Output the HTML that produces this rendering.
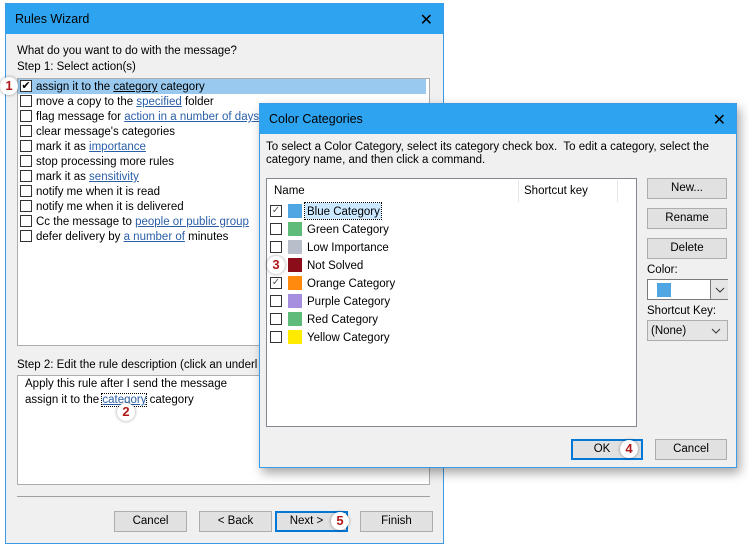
<!DOCTYPE html>
<html><head><style>
*{box-sizing:border-box;margin:0;padding:0}
body{width:749px;height:548px;background:#fff;font-family:"Liberation Sans",sans-serif;font-size:11.5px;color:#000;position:relative;overflow:hidden}
.abs{position:absolute}
.win{position:absolute;background:#f0f0f0;border:1px solid #3c9be6}
.tb{position:absolute;left:0;right:0;top:0;height:30px;background:#2ea4f0;font-size:12.5px;padding:8px 0 0 9px}
.x{position:absolute;right:10px;top:6px;font-size:16px;font-weight:300}
.box{position:absolute;background:#fff;border:1px solid #adadad}
.btn{position:absolute;background:#e1e1e1;border:1px solid #adadad;text-align:center;line-height:19px;font-size:11.5px}
.cb{position:absolute;width:12px;height:12px;border:1px solid #333;background:#fff}
.row{position:absolute;left:20px;height:15px;line-height:15px;white-space:nowrap}
.row .cb{left:0;top:1px}
.row span.t{position:absolute;left:16px;top:1px}
a{color:#2a5fa8;text-decoration:underline}
.badge{position:absolute;width:18px;height:18px;border-radius:9px;background:#fff;color:#b01a1a;font-weight:bold;font-size:13px;text-align:center;line-height:18px;box-shadow:0 0 3px rgba(0,0,0,.4)}
.sw{position:absolute;width:14px;height:14px}
.cr{position:absolute;left:270px;height:18px;line-height:18px;white-space:nowrap}
.cr .cb{left:0;top:3px}
.cr .sw{left:18px;top:2px}
.cr .t{position:absolute;left:37px;top:1px}
</style></head><body>

<div class="win" style="left:5px;top:3px;width:439px;height:541px">
  <div class="tb">Rules Wizard<span class="x">✕</span></div>
</div>
<div class="abs" style="left:17px;top:45px">What do you want to do with the message?</div>
<div class="abs" style="left:17px;top:61px">Step 1: Select action(s)</div>
<div class="box" style="left:17px;top:78px;width:413px;height:268px"></div>
<div class="abs" style="left:18px;top:79px;width:408px;height:15px;background:#99c9ef"></div>
<div class="row" style="top:79px"><div class="cb" style="font-size:11px;line-height:10px;text-align:center">✔</div><span class="t">assign it to the <u>category</u> category</span></div>
<div class="row" style="top:94px"><div class="cb"></div><span class="t">move a copy to the <a>specified</a> folder</span></div>
<div class="row" style="top:109px"><div class="cb"></div><span class="t">flag message for <a>action in a number of days</a></span></div>
<div class="row" style="top:124px"><div class="cb"></div><span class="t">clear message's categories</span></div>
<div class="row" style="top:139px"><div class="cb"></div><span class="t">mark it as <a>importance</a></span></div>
<div class="row" style="top:154px"><div class="cb"></div><span class="t">stop processing more rules</span></div>
<div class="row" style="top:169px"><div class="cb"></div><span class="t">mark it as <a>sensitivity</a></span></div>
<div class="row" style="top:184px"><div class="cb"></div><span class="t">notify me when it is read</span></div>
<div class="row" style="top:199px"><div class="cb"></div><span class="t">notify me when it is delivered</span></div>
<div class="row" style="top:214px"><div class="cb"></div><span class="t">Cc the message to <a>people or public group</a></span></div>
<div class="row" style="top:229px"><div class="cb"></div><span class="t">defer delivery by <a>a number of</a> minutes</span></div>
<div class="badge" style="left:0;top:77px">1</div>

<div class="abs" style="left:17px;top:359px">Step 2: Edit the rule description (click an underl</div>
<div class="box" style="left:17px;top:375px;width:413px;height:110px"></div>
<div class="abs" style="left:25px;top:378px">Apply this rule after I send the message</div>
<div class="abs" style="left:25px;top:394px">assign it to the <a style="outline:1px dotted #000">category</a> category</div>
<div class="badge" style="left:117px;top:403px">2</div>
<div class="abs" style="left:17px;top:496px;width:413px;height:1px;background:#a0a0a0"></div>
<div class="btn" style="left:114px;top:511px;width:73px;height:21px">Cancel</div>
<div class="btn" style="left:199px;top:511px;width:73px;height:21px">&lt; Back</div>
<div class="btn" style="left:275px;top:511px;width:73px;height:21px;border:2px solid #0078d7;padding-right:10px;line-height:17px">Next &gt;</div>
<div class="badge" style="left:331px;top:512px">5</div>
<div class="btn" style="left:360px;top:511px;width:73px;height:21px">Finish</div>

<div class="win" style="left:259px;top:103px;width:478px;height:365px;box-shadow:3px 5px 10px rgba(0,0,0,.35)">
  <div class="tb">Color Categories<span class="x">✕</span></div>
</div>
<div class="abs" style="left:266px;top:141px;width:465px;line-height:13px">To select a Color Category, select its category check box.&nbsp; To edit a category, select the category name, and then click a command.</div>
<div class="box" style="left:266px;top:178px;width:371px;height:249px;border-color:#828790"></div>
<div class="abs" style="left:274px;top:185px">Name</div>
<div class="abs" style="left:518px;top:180px;width:1px;height:22px;background:#e5e5e5"></div>
<div class="abs" style="left:524px;top:185px">Shortcut key</div>
<div class="abs" style="left:617px;top:180px;width:1px;height:22px;background:#e5e5e5"></div>
<div class="abs" style="left:305px;top:203px;width:76px;height:16px;background:#cce8ff;outline:1px dotted #000"></div>
<div class="cr" style="top:202px"><div class="cb" style="font-size:10px;line-height:10px;text-align:center;color:#555">✓</div><div class="sw" style="background:#4fa6e2"></div><span class="t">Blue Category</span></div>
<div class="cr" style="top:220px"><div class="cb"></div><div class="sw" style="background:#5fbb7a"></div><span class="t">Green Category</span></div>
<div class="cr" style="top:238px"><div class="cb"></div><div class="sw" style="background:#b9bfca"></div><span class="t">Low Importance</span></div>
<div class="cr" style="top:256px"><div class="cb"></div><div class="sw" style="background:#8c0d1a"></div><span class="t">Not Solved</span></div>
<div class="cr" style="top:274px"><div class="cb" style="font-size:10px;line-height:10px;text-align:center;color:#555">✓</div><div class="sw" style="background:#ff8a0e"></div><span class="t">Orange Category</span></div>
<div class="cr" style="top:292px"><div class="cb"></div><div class="sw" style="background:#a78fe0"></div><span class="t">Purple Category</span></div>
<div class="cr" style="top:310px"><div class="cb"></div><div class="sw" style="background:#5fbb7a"></div><span class="t">Red Category</span></div>
<div class="cr" style="top:328px"><div class="cb"></div><div class="sw" style="background:#ffeb00"></div><span class="t">Yellow Category</span></div>
<div class="badge" style="left:267px;top:256px">3</div>

<div class="btn" style="left:647px;top:178px;width:80px;height:21px">New...</div>
<div class="btn" style="left:647px;top:208px;width:80px;height:21px">Rename</div>
<div class="btn" style="left:647px;top:238px;width:80px;height:21px">Delete</div>
<div class="abs" style="left:647px;top:264px">Color:</div>
<div class="abs" style="left:647px;top:279px;width:81px;height:21px;background:#fff;border:1px solid #7a7a7a">
  <div class="abs" style="left:9px;top:3px;width:14px;height:14px;background:#4fa6e2"></div>
  <div class="abs" style="left:62px;top:0;width:18px;height:19px;background:#e5e5e5;border-left:1px solid #7a7a7a"><svg width="18" height="19"><path d="M5 8 L9 12 L13 8" fill="none" stroke="#333" stroke-width="1"/></svg></div>
</div>
<div class="abs" style="left:647px;top:305px">Shortcut Key:</div>
<div class="abs" style="left:647px;top:320px;width:81px;height:21px;background:#e5e5e5;border:1px solid #adadad;padding:4px 0 0 3px">(None)<svg class="abs" style="right:2px;top:0" width="18" height="19"><path d="M5 8 L9 12 L13 8" fill="none" stroke="#333" stroke-width="1"/></svg></div>
<div class="btn" style="left:571px;top:439px;width:72px;height:21px;border:2px solid #0078d7;padding-right:10px;line-height:17px">OK</div>
<div class="badge" style="left:620px;top:440px">4</div>
<div class="btn" style="left:655px;top:439px;width:72px;height:21px">Cancel</div>
</body></html>
